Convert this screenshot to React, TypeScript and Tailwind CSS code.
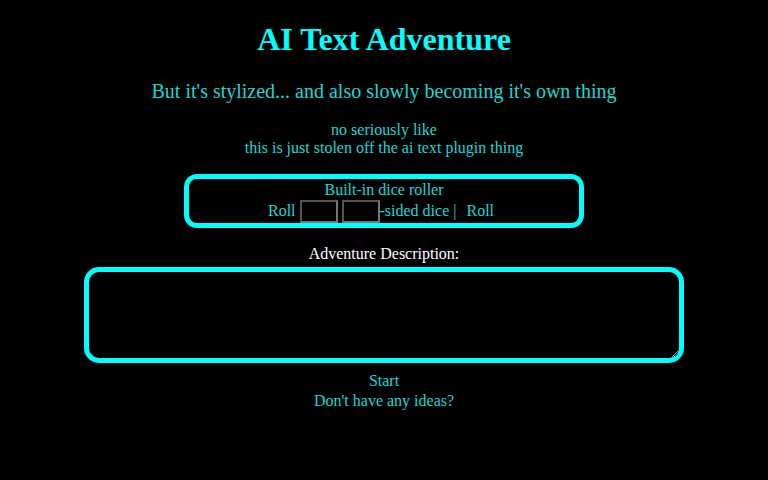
export default function App() {
  return (
    <div className="min-h-[480px] w-full bg-black text-center text-[#1fd6d6] font-['Liberation_Serif',serif]">
      <div className="flex flex-col items-center pt-[21px]">
        <h1 className="text-[32px] leading-[37px] font-bold text-[#00ffff]">AI Text Adventure</h1>
        <h2 className="mt-[22px] text-[20px] leading-[23px]">
          But it's stylized... and also slowly becoming it's own thing
        </h2>
        <p className="mt-[18px] text-[16px] leading-[18px]">
          no seriously like
          <br />
          this is just stolen off the ai text plugin thing
        </p>

        {/* dice roller */}
        <div className="mt-[17px] w-[400px] rounded-[13px] border-[5px] border-[#00ffff] text-[16px]">
          <div className="leading-[19px] pt-[1px]">Built-in dice roller</div>
          <div className="flex items-center justify-center h-[24px] leading-[18px]">
            <span>Roll&nbsp;</span>
            <input className="w-[38px] h-[23px] bg-black border-2 border-[#767676] border-t-[#555] border-l-[#555]" />
            <span>&nbsp;</span>
            <input className="w-[38px] h-[23px] bg-black border-2 border-[#767676] border-t-[#555] border-l-[#555]" />
            <span>-sided dice |&nbsp;</span>
            <button className="px-[6px] text-[#1fd6d6]">Roll</button>
          </div>
        </div>

        <label className="mt-[17px] text-[16px] leading-[18px] text-white">Adventure Description:</label>
        <textarea className="mt-[4px] w-[600px] h-[96px] rounded-[15px] border-[5px] border-[#00ffff] bg-black text-[#1fd6d6] outline-none" />

        <button className="mt-[8px] text-[16px] leading-[20px] text-[#1fd6d6]">Start</button>
        <button className="text-[16px] leading-[20px] text-[#1fd6d6]">Don't have any ideas?</button>
      </div>
    </div>
  );
}
